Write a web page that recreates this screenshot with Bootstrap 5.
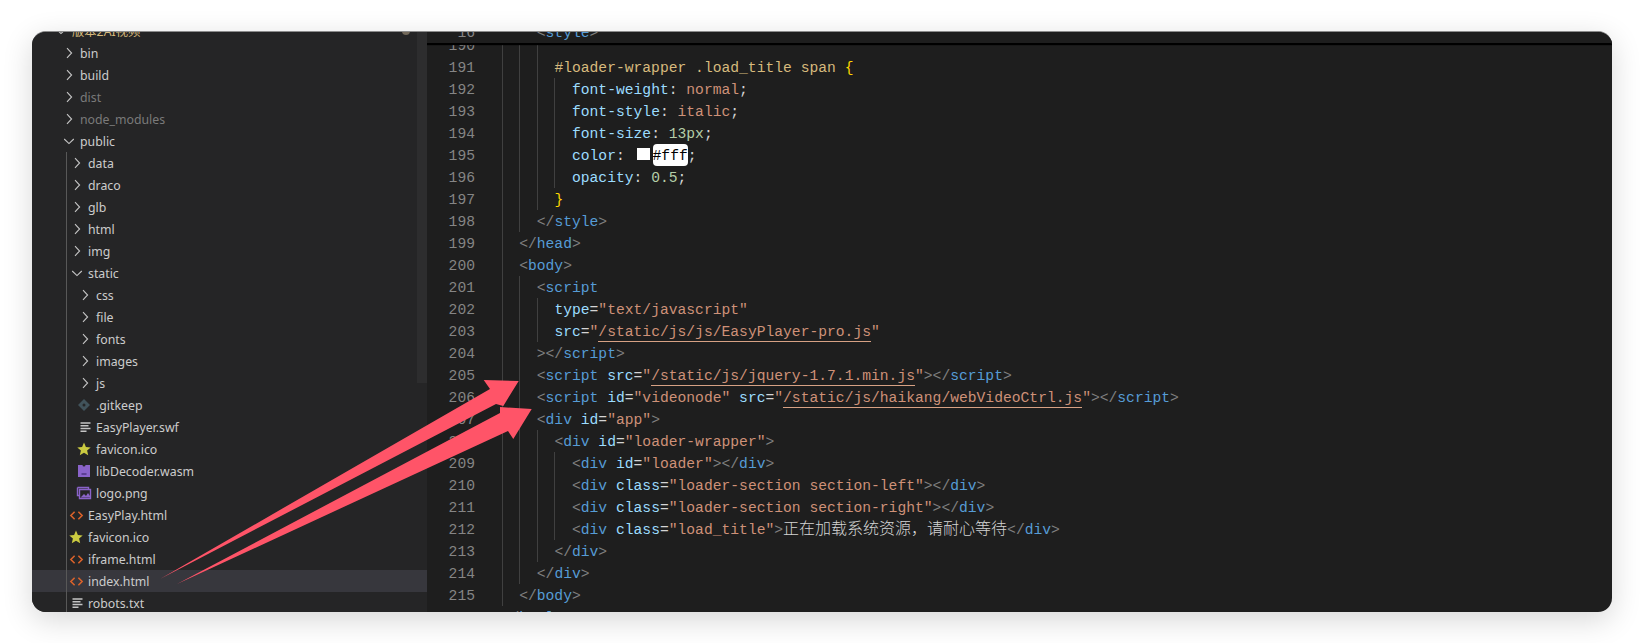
<!DOCTYPE html>
<html lang="zh">
<head>
<meta charset="utf-8">
<title>VS Code</title>
<link href="https://cdn.jsdelivr.net/npm/bootstrap@5.3.0/dist/css/bootstrap.min.css" rel="stylesheet">
<style>
html,body{height:100%}
body{background:#fff;padding:31px 31px 31px 32px;overflow:hidden}
.stage{position:relative}
.shot{height:581px;border-radius:14px;overflow:hidden;background:#1e1e1e;box-shadow:0 8px 30px rgba(0,0,0,.16);border-top:1px solid #8c8c8c}
.side{width:395px;flex:none;background:#252526;font:12.3px/22px "Noto Sans","Noto Sans CJK SC",sans-serif;color:#cccccc;overflow:hidden}
.side-track{width:385px;flex:none;position:relative;z-index:1}
.side-rail{width:10px;flex:none;height:351px;background:#2d2d2e}
.side-list{margin-top:-12px;width:395px}
.trow{height:22px;white-space:nowrap;padding-left:var(--ind)}
.trow.l0{--ind:21px}.trow.l1{--ind:29px}.trow.l2{--ind:37px}.trow.l3{--ind:45px}
.tname{line-height:24px}
.ico{width:19px;flex:none;display:flex;justify-content:center;align-items:center;height:22px;padding-right:3px}
.ico.file{padding-right:5px}
.ico svg{display:block;flex:none}
.dim{color:#7a7a7a}
.trow.sel{background:#37373d}
.proj{color:#d7ba7d}
.guide{position:absolute;left:34px;top:120px;bottom:0;width:1px;background:#585858}
.mod{position:absolute;left:370px;top:-5px;width:8px;height:8px;border-radius:50%;background:#73695a}
.edit{flex:1;position:relative;overflow:hidden;font:14.67px/24px "Liberation Mono",monospace;color:#d4d4d4}
.stick{position:absolute;left:0;right:0;top:0;height:11px;background:#1e1e1e;overflow:hidden;box-shadow:0 2px 1px #000;z-index:2}
.stick .cline{margin-top:-11px}
.code-list{margin-top:2px}
.cline{height:22px;display:flex;white-space:pre;position:relative}
.num{width:48px;flex:none;text-align:right;color:#858585}
.src{margin-left:26.6px;display:block;position:relative;height:22px}
.ig{position:absolute;top:0;height:22px;width:1px;background:#404040}
.t{color:#808080}.g{color:#569cd6}.a{color:#9cdcfe}.s{color:#ce9178}.w{color:#d4d4d4}
.sel-s{color:#d7ba7d}.b{color:#ffd700}.n{color:#b5cea8}
.u{border-bottom:1px solid #d7a184;display:inline-block;line-height:20px;height:20px}
.sw{display:inline-block;width:13px;height:12px;background:#fff;margin:0 3px;vertical-align:0}
.hl{background:#fff;color:#000;border-radius:4px;display:inline-block;height:22px}
.cjk{font-family:"Noto Sans CJK SC",monospace;font-size:16px;font-weight:300;line-height:1}
.arrows{position:absolute;left:-32px;top:-31px;width:1643px;height:643px;pointer-events:none;z-index:3}
</style>
</head>
<body>
<div class="stage">
<div class="shot d-flex">
  <div class="side d-flex">
    <div class="side-track">
      <div class="guide"></div>
      <div class="mod"></div>
      <div class="side-list" id="tree"></div>
    </div>
    <div class="side-rail"></div>
  </div>
  <div class="edit">
    <div class="stick"><div class="cline"><span class="num">16</span><span class="src"><span class="t">    &lt;</span><span class="g">style</span><span class="t">&gt;</span></span></div></div>
    <div class="code-list" id="code"></div>
  </div>
</div>
<svg class="arrows" viewBox="0 0 1643 643">
  <polygon fill="#ff5468" points="160,579 490,389 483.700,380 518.700,381 503.300,406 496,404"/>
  <polygon fill="#ff5468" points="177,584 500,413 500,407 531.700,409 513.300,439 508,431"/>
</svg>
</div>
<script>
const chevR='<svg width="16" height="16" viewBox="0 0 16 16"><path d="M6 3.200 10.600 8 6 12.800" fill="none" stroke="#c5c5c5" stroke-width="1.100"/></svg>';
const chevD='<svg width="16" height="16" viewBox="0 0 16 16"><path d="M3.200 6 8 10.600 12.800 6" fill="none" stroke="#c5c5c5" stroke-width="1.100"/></svg>';
const html='<svg width="15" height="15" viewBox="0 0 16 16"><path d="M6 4 2 8l4 4M10 4l4 4-4 4" fill="none" stroke="#d9622b" stroke-width="1.700"/></svg>';
const star='<svg width="16" height="16" viewBox="0 0 16 16"><path d="M8 1.600 9.900 6l4.800.4-3.600 3.100 1.100 4.700L8 11.700l-4.200 2.500 1.100-4.700-3.600-3.100L6.100 6z" fill="#cbcb41"/></svg>';
const lines='<svg width="16" height="16" viewBox="0 0 16 16"><path d="M4.500 4h10M4.500 6.800h8M4.500 9.500h10M4.500 12.200h6" stroke="#c5c5c5" stroke-width="1.500"/></svg>';
const git='<svg width="16" height="16" viewBox="0 0 16 16"><path d="M8 2 14 8 8 14 2 8z" fill="#41535b"/><circle cx="8" cy="8" r="1.500" fill="#252526"/></svg>';
const wasm='<svg width="16" height="16" viewBox="0 0 16 16"><path d="M2 2h4.500a1.500 1.500 0 0 0 3 0H14v12H2z" fill="#8a63c9"/><path d="M5.500 11h5" stroke="#4c3380" stroke-width="1.500"/></svg>';
const png='<svg width="16" height="16" viewBox="0 0 16 16"><path d="M1.500 2.500h11v2M3.500 4.500h11v9h-11z" fill="none" stroke="#8a63c9" stroke-width="1.400"/><path d="M1.500 2.500v8h2" fill="none" stroke="#8a63c9" stroke-width="1.400"/><path d="M5 12l3-3 2 2 2-3 2 3v1.500H5z" fill="#8a63c9"/></svg>';
const T=[
['l0',chevD,'版本2AI视频','proj'],
['l1',chevR,'bin'],['l1',chevR,'build'],['l1',chevR,'dist','dim'],['l1',chevR,'node_modules','dim'],['l1',chevD,'public'],
['l2',chevR,'data'],['l2',chevR,'draco'],['l2',chevR,'glb'],['l2',chevR,'html'],['l2',chevR,'img'],['l2',chevD,'static'],
['l3',chevR,'css'],['l3',chevR,'file'],['l3',chevR,'fonts'],['l3',chevR,'images'],['l3',chevR,'js'],
['l3',git,'.gitkeep'],['l3',lines,'EasyPlayer.swf'],['l3',star,'favicon.ico'],['l3',wasm,'libDecoder.wasm'],['l3',png,'logo.png'],
['l2',html,'EasyPlay.html'],['l2',star,'favicon.ico'],['l2',html,'iframe.html'],['l2 sel',html,'index.html'],['l2',lines,'robots.txt']];
document.getElementById('tree').innerHTML=T.map(r=>`<div class="trow d-flex ${r[0]}"><span class="ico ${r[1]===chevR||r[1]===chevD?'':'file'}">${r[1]}</span><span class="tname ${r[3]||''}">${r[2]}</span></div>`).join('');
const t=s=>`<span class="t">${s}</span>`,g=s=>`<span class="g">${s}</span>`,a=s=>`<span class="a">${s}</span>`,s=x=>`<span class="s">${x}</span>`;
const o=n=>t('&lt;')+g(n),c=n=>t('&lt;/')+g(n)+t('&gt;');
const dv=(attr,val)=>o('div')+' '+a(attr)+'='+s('"'+val+'"')+t('&gt;');
const L=[
[190,0,[0,1,2],''],
[191,3,[0,1,2],'<span class="sel-s">#loader-wrapper .load_title span</span> <span class="b">{</span>'],
[192,4,[0,1,2,3],a('font-weight')+': '+s('normal')+';'],
[193,4,[0,1,2,3],a('font-style')+': '+s('italic')+';'],
[194,4,[0,1,2,3],a('font-size')+': '+'<span class="n">13px</span>;'],
[195,4,[0,1,2,3],a('color')+': <span class="sw"></span><span class="hl">#fff</span>;'],
[196,4,[0,1,2,3],a('opacity')+': <span class="n">0.5</span>;'],
[197,3,[0,1,2],'<span class="b">}</span>'],
[198,2,[0,1],c('style')],
[199,1,[0],c('head')],
[200,1,[0],o('body')+t('&gt;')],
[201,2,[0,1],o('script')],
[202,3,[0,1,2],a('type')+'='+s('"text/javascript"')],
[203,3,[0,1,2],a('src')+'='+s('"<span class="u">/static/js/js/EasyPlayer-pro.js</span>"')],
[204,2,[0,1],t('&gt;&lt;/')+g('script')+t('&gt;')],
[205,2,[0,1],o('script')+' '+a('src')+'='+s('"<span class="u">/static/js/jquery-1.7.1.min.js</span>"')+t('&gt;&lt;/')+g('script')+t('&gt;')],
[206,2,[0,1],o('script')+' '+a('id')+'='+s('"videonode"')+' '+a('src')+'='+s('"<span class="u">/static/js/haikang/webVideoCtrl.js</span>"')+t('&gt;&lt;/')+g('script')+t('&gt;')],
[207,2,[0,1],dv('id','app')],
[208,3,[0,1,2],dv('id','loader-wrapper')],
[209,4,[0,1,2,3],dv('id','loader')+c('div')],
[210,4,[0,1,2,3],dv('class','loader-section section-left')+c('div')],
[211,4,[0,1,2,3],dv('class','loader-section section-right')+c('div')],
[212,4,[0,1,2,3],dv('class','load_title')+'<span class="cjk w">正在加载系统资源，请耐心等待</span>'+c('div')],
[213,3,[0,1,2],c('div')],
[214,2,[0,1],c('div')],
[215,1,[0],c('body')],
[216,0,[],c('html')]];
document.getElementById('code').innerHTML=L.map(l=>{
 const gd=l[2].map(i=>`<span class="ig" style="left:${(i*17.6).toFixed(1)}px"></span>`).join('');
 return `<div class="cline"><span class="num">${l[0]}</span><span class="src">${gd}${' '.repeat(l[1]*2)}${l[3]}</span></div>`;
}).join('');
</script>
<script src="https://cdn.jsdelivr.net/npm/bootstrap@5.3.0/dist/js/bootstrap.bundle.min.js"></script>
</body>
</html>
